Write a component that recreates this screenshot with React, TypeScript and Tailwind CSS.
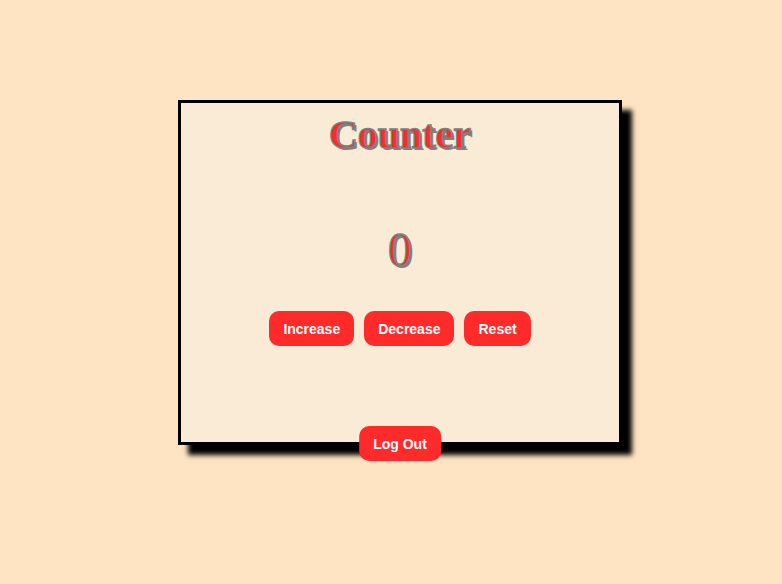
import { useState } from "react";

const buttonClass =
  "h-[35px] rounded-[10px] bg-[#ff2a2a] px-[14px] text-[14px] font-bold leading-[16px] text-white";

const outlined =
  "font-['Liberation_Serif','Times_New_Roman',serif] text-[#ff2a2a] [-webkit-text-stroke:1.5px_#808080] [text-shadow:2px_2px_0_#808080]";

export default function App() {
  const [count, setCount] = useState(0);

  return (
    <div className="min-h-[584px] w-full bg-[#ffe4c4] pl-[178px] pt-[100px] font-['Liberation_Sans',Arial,sans-serif]">
      <div className="relative flex h-[345px] w-[444px] flex-col items-center border-[3px] border-black bg-[#faebd7] shadow-[10px_10px_5px_#000]">
        <h1 className={`mt-[9px] text-[40px] font-bold leading-[46px] ${outlined}`}>Counter</h1>
        <p className={`mt-[64px] text-[48px] font-normal leading-[55px] ${outlined}`}>{count}</p>
        <div className="mt-[34px] flex gap-[10px]">
          <button type="button" className={buttonClass} onClick={() => setCount(count + 1)}>
            Increase
          </button>
          <button type="button" className={buttonClass} onClick={() => setCount(count - 1)}>
            Decrease
          </button>
          <button type="button" className={buttonClass} onClick={() => setCount(0)}>
            Reset
          </button>
        </div>
        <button
          type="button"
          className={`${buttonClass} absolute bottom-[-19px] left-1/2 -translate-x-1/2`}
        >
          Log Out
        </button>
      </div>
    </div>
  );
}
